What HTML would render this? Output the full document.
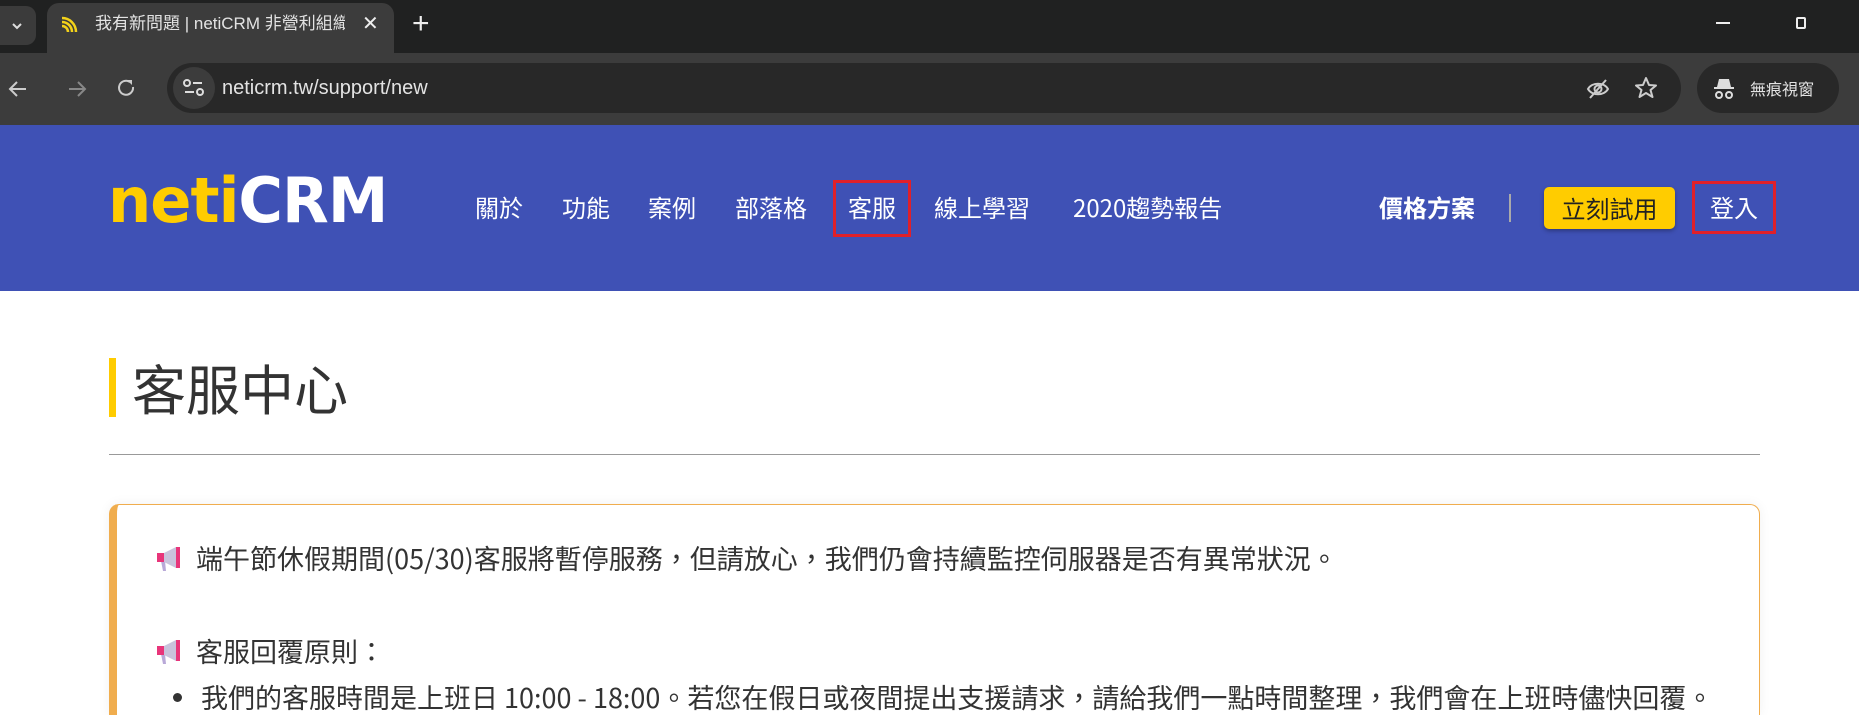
<!DOCTYPE html>
<html style="width:1859px;height:715px;overflow:hidden"><head><meta charset="utf-8">
<style>
*{margin:0;padding:0;box-sizing:border-box}
body{width:1859px;height:715px;overflow:hidden;background:#fff;font-family:"Liberation Sans","Noto Sans CJK TC",sans-serif;position:relative}
.abs{position:absolute}
.tabs{left:0;top:0;width:1859px;height:53px;background:#202121}
.tb{left:0;top:53px;width:1859px;height:72px;background:#3c3c3c}
.nav{left:0;top:125px;width:1859px;height:166px;background:#3f51b5}
.ni{color:#fff;font-size:24px;top:192px;line-height:30px;font-family:"Noto Sans CJK TC",sans-serif}
.txt{font-family:"Noto Sans CJK TC",sans-serif;color:#333;font-size:27px;line-height:36px}
</style></head><body>
<div class="abs tabs"></div>
<div class="abs" style="left:0;top:6px;width:36px;height:39px;background:#3b3b3b;border-radius:0 10px 10px 0"></div>
<svg class="abs" style="left:8px;top:17px" width="18" height="18" viewBox="0 0 18 18"><path d="M5 7l4 4 4-4" stroke="#ddd" stroke-width="2" fill="none"/></svg>
<div class="abs" style="left:47px;top:3px;width:347px;height:52px;background:#3c3c3c;border-radius:12px 12px 0 0"></div>
<svg class="abs" style="left:59px;top:13px" width="22" height="22" viewBox="0 0 22 22"><path d="M3 5a14 14 0 0 1 14 14M3 9a10 10 0 0 1 10 10M3 13a6 6 0 0 1 6 6" stroke="#f3d21a" stroke-width="2.5" fill="none"/></svg>
<div class="abs" style="left:95px;top:12px;color:#e3e3e3;font-size:17px;line-height:24px;white-space:nowrap;width:250px;overflow:hidden">我有新問題 | netiCRM 非營利組織</div>
<div class="abs" style="left:362px;top:11px;color:#eee;font-size:20px">✕</div>
<div class="abs" style="left:412px;top:6px;color:#eee;font-size:30px;line-height:36px">+</div>
<div class="abs" style="left:1716px;top:22px;width:14px;height:2px;background:#eee"></div>
<div class="abs" style="left:1796px;top:17px;width:10px;height:12px;border:2px solid #eee;border-radius:2px"></div>
<div class="abs tb"></div>
<svg class="abs" style="left:6px;top:76px" width="90" height="26" viewBox="0 0 90 26"><path d="M20 13H5M11 6l-7 7 7 7" stroke="#ccc" stroke-width="2" fill="none"/><path d="M63 13h15M72 6l7 7-7 7" stroke="#888" stroke-width="2" fill="none"/></svg>
<svg class="abs" style="left:116px;top:78px" width="20" height="20" viewBox="0 0 20 20"><path d="M17 9A7 7 0 1 1 14 4" stroke="#ccc" stroke-width="2" fill="none"/><path d="M11 2h5v5z" fill="#ccc"/></svg>
<div class="abs" style="left:167px;top:63px;width:1514px;height:50px;background:#282828;border-radius:25px"></div>
<div class="abs" style="left:173px;top:67px;width:42px;height:42px;background:#3c3c3c;border-radius:21px"></div>
<svg class="abs" style="left:181px;top:76px" width="26" height="24" viewBox="0 0 26 24"><circle cx="6" cy="7" r="3" stroke="#ddd" stroke-width="2" fill="none"/><path d="M12 7h9M4 16h9" stroke="#ddd" stroke-width="2"/><circle cx="19" cy="16" r="3" stroke="#ddd" stroke-width="2" fill="none"/></svg>
<div class="abs" style="left:222px;top:75px;color:#e3e3e3;font-size:20px;line-height:26px">neticrm.tw/support/new</div>
<svg class="abs" style="left:1585px;top:76px" width="26" height="26" viewBox="0 0 26 26"><path d="M3 13c4-7 16-7 20 0-4 7-16 7-20 0z" stroke="#ccc" stroke-width="2" fill="none"/><circle cx="13" cy="13" r="3.5" stroke="#ccc" stroke-width="2" fill="none"/><path d="M5 22L21 4" stroke="#ccc" stroke-width="2"/></svg>
<svg class="abs" style="left:1633px;top:75px" width="26" height="26" viewBox="0 0 26 26"><path d="M13 3l3 7 7 .5-5.5 4.5 2 7-6.5-4-6.5 4 2-7L3 10.5l7-.5z" stroke="#ccc" stroke-width="2" fill="none" stroke-linejoin="round"/></svg>
<div class="abs" style="left:1697px;top:63px;width:142px;height:50px;background:#282828;border-radius:25px"></div>
<svg class="abs" style="left:1712px;top:76px" width="24" height="26" viewBox="0 0 24 26"><path d="M7 3h10l2 8H5z" fill="#ddd"/><path d="M2 12h20" stroke="#ddd" stroke-width="2"/><circle cx="7" cy="19" r="3" stroke="#ddd" stroke-width="2" fill="none"/><circle cx="17" cy="19" r="3" stroke="#ddd" stroke-width="2" fill="none"/></svg>
<div class="abs" style="left:1750px;top:77px;color:#e3e3e3;font-size:16px;font-family:'Noto Sans CJK TC',sans-serif;line-height:22px">無痕視窗</div>

<div class="abs nav"></div>
<div class="abs" style="left:108px;top:164px;font-size:62px;font-weight:900;line-height:74px;letter-spacing:-1px;font-family:'DejaVu Sans','Liberation Sans',sans-serif;transform:scaleX(0.98);transform-origin:left"><span style="color:#ffcc00">neti</span><span style="color:#fff">CRM</span></div>
<div class="abs ni" style="left:475px">關於</div>
<div class="abs ni" style="left:562px">功能</div>
<div class="abs ni" style="left:648px">案例</div>
<div class="abs ni" style="left:735px">部落格</div>
<div class="abs ni" style="left:848px">客服</div>
<div class="abs" style="left:833px;top:180px;width:78px;height:57px;border:3px solid #e0202a"></div>
<div class="abs ni" style="left:934px">線上學習</div>
<div class="abs ni" style="left:1073px">2020趨勢報告</div>
<div class="abs ni" style="left:1379px;font-weight:bold">價格方案</div>
<div class="abs" style="left:1509px;top:194px;width:2px;height:28px;background:#aaa"></div>
<div class="abs" style="left:1544px;top:187px;width:131px;height:42px;background:#ffcc00;border-radius:5px;box-shadow:0 2px 4px rgba(0,0,0,.3);color:#222;font-size:24px;line-height:42px;text-align:center;font-family:'Noto Sans CJK TC',sans-serif">立刻試用</div>
<div class="abs" style="left:1692px;top:181px;width:84px;height:53px;border:3px solid #e0202a"></div>
<div class="abs ni" style="left:1710px">登入</div>

<div class="abs" style="left:109px;top:358px;width:7px;height:59px;background:#ffcc00"></div>
<div class="abs" style="left:132px;top:355px;font-size:54px;color:#333;line-height:64px;font-family:'Noto Sans CJK TC',sans-serif">客服中心</div>
<div class="abs" style="left:109px;top:454px;width:1651px;height:1px;background:#999"></div>

<div class="abs" style="left:109px;top:504px;width:1651px;height:211px;border:1px solid #f0ad4e;border-bottom:none;border-left:8px solid #f0ad4e;border-radius:10px 10px 0 0;box-shadow:0 0 12px rgba(0,0,0,.06)"></div>
<svg class="abs" style="left:155px;top:544px" width="28" height="28" viewBox="0 0 28 28"><path d="M6 17l2 10h3l-1-10z" fill="#b9a9d8"/><path d="M2 9h7v9H2z" fill="#e8357a"/><path d="M9 9l12-6v21l-12-6z" fill="#c9c3dc"/><path d="M21 3h4v21h-4z" fill="#e8357a"/></svg>
<div class="abs txt" style="left:196px;top:540px;white-space:nowrap">端午節休假期間(05/30)客服將暫停服務，但請放心，我們仍會持續監控伺服器是否有異常狀況。</div>
<svg class="abs" style="left:155px;top:637px" width="28" height="28" viewBox="0 0 28 28"><path d="M6 17l2 10h3l-1-10z" fill="#b9a9d8"/><path d="M2 9h7v9H2z" fill="#e8357a"/><path d="M9 9l12-6v21l-12-6z" fill="#c9c3dc"/><path d="M21 3h4v21h-4z" fill="#e8357a"/></svg>
<div class="abs txt" style="left:196px;top:633px">客服回覆原則：</div>
<div class="abs" style="left:173px;top:693px;width:9px;height:9px;border-radius:50%;background:#333"></div>
<div class="abs txt" style="left:201px;top:679px;white-space:nowrap">我們的客服時間是上班日 10:00 - 18:00。若您在假日或夜間提出支援請求，請給我們一點時間整理，我們會在上班時儘快回覆。</div>
</body></html>
